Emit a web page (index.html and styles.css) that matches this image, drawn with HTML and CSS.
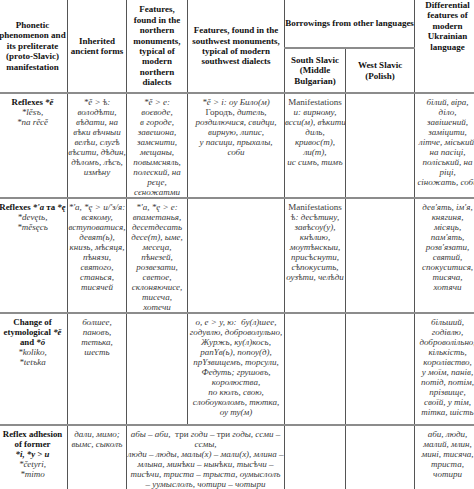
FILE: index.html
```html
<!DOCTYPE html>
<html lang="en">
<head>
<meta charset="utf-8">
<title>Table</title>
<link rel="stylesheet" href="styles.css">
</head>
<body>
<table class="tbl">
  <colgroup>
    <col class="w1"><col class="w2"><col class="w3"><col class="w4"><col class="w5"><col class="w6"><col class="w7">
  </colgroup>
  <thead>
    <tr class="h1">
      <th rowspan="2">Phonetic<br>phenomenon and<br>its preliterate<br>(proto-Slavic)<br>manifestation</th>
      <th rowspan="2">Inherited<br>ancient forms</th>
      <th rowspan="2">Features,<br>found in the<br>northern<br>monuments,<br>typical of<br>modern<br>northern<br>dialects</th>
      <th rowspan="2">Features, found in the<br>southwest monuments,<br>typical of modern<br>southwest dialects</th>
      <th colspan="2">Borrowings from other languages</th>
      <th rowspan="2" class="top">Differential<br>features of<br>modern<br>Ukrainian<br>language</th>
    </tr>
    <tr class="h2">
      <th>South Slavic<br>(Middle<br>Bulgarian)</th>
      <th>West Slavic<br>(Polish)</th>
    </tr>
  </thead>
  <tbody>
    <tr class="r1">
      <td><span class="hd">Reflexes <i>*ě</i></span><br>*lěsъ,<br>*na rěcě</td>
      <td>*ě &gt; <span class="y">ѣ</span>:<br>волод<span class="y">ѣ</span>ти,<br>в<span class="y">ѣ</span>дати, на<br>в<span class="y">ѣ</span>ки в<span class="y">ѣ</span>чныи<br>вел<span class="y">ѣ</span>и, слуг<span class="y">ѣ</span><br>в<span class="y">ѣ</span>сити, д<span class="y">ѣ</span>дин,<br>д<span class="y">ѣ</span>ломъ, л<span class="y">ѣ</span>съ,<br>изм<span class="y">ѣ</span>ну</td>
      <td>*ě &gt; е:<br>воєводе,<br>в городе,<br>завешона,<br>замснити,<br>мещаны,<br>повымсняль,<br>полеский, на<br>рєце,<br>сєножатми</td>
      <td>*ě &gt; і: оу Било(м)<br><span class="up">Городъ</span>, дитель,<br>роздилючися, свидци,<br>вирную, липис,<br>у пасици, прыхалы,<br>соби</td>
      <td><span class="up">Manifestations</span><br>и: вирному,<br>всси(м), в<span class="y">ѣ</span>кити,<br>диль,<br>кривос(т),<br>ли(т),<br>ис симъ, тимъ</td>
      <td></td>
      <td>білий, віра,<br>діло,<br>завішений,<br>заміцити,<br>літче, міський,<br>на пасіці,<br>поліський, на<br>ріці,<br>сіножать, соби</td>
    </tr>
    <tr class="r2">
      <td><span class="hd">Reflexes <i>*'a</i> та <i>*ę</i></span><br>*devętь,<br>*měsęcь</td>
      <td>*'a, *ę &gt; u/'з/я:<br>всякому,<br>вступоватися,<br>девят(ь),<br>книзь, м<span class="y">ѣ</span>сяця,<br>п<span class="y">ѣ</span>нязи,<br>святого,<br>станься,<br>тисячей</td>
      <td>*'a, *ę &gt; е:<br>впаметанья,<br>десетдесать<br>десе(т), ыме,<br>месеца,<br>п<span class="y">ѣ</span>незей,<br>розвезати,<br>светое,<br>склоняючисе,<br>тисеча,<br>хотечи</td>
      <td></td>
      <td><span class="up">Manifestations</span><br><span class="y">ѣ</span>: дес<span class="y">ѣ</span>тину,<br>зав<span class="y">ѣ</span>соу(у),<br>кн<span class="y">ѣ</span>лию,<br>моут<span class="y">ѣ</span>нскыи,<br>прис<span class="y">ѣ</span>снути,<br>с<span class="y">ѣ</span>покусить,<br>оуз<span class="y">ѣ</span>ти, чел<span class="y">ѣ</span>ди</td>
      <td></td>
      <td>дев'ять, ім'я,<br>княгиня,<br>місяць,<br>пам'ять,<br>розв'язати,<br>святий,<br>спокуситися,<br>тисяча,<br>хотячи</td>
    </tr>
    <tr class="r3">
      <td><span class="hd">Change of<br>etymological <i>*ě</i><br>and <i>*ō</i></span><br>*koliko,<br>*tetъka</td>
      <td>болшее,<br>пановъ,<br>тетька,<br>шесть</td>
      <td></td>
      <td>о, е &gt; у, ю: &nbsp;бу(л)шее,<br>годувлю, доброволульно,<br>Журжь, ку(л)кось,<br>panYв(ь), попоу(д),<br>прYзвищемъ, торсули,<br>Федуть; грушовъ,<br>королюства,<br>по кюлъ, свою,<br>слобоуколомъ, тютка,<br>оу ту(м)</td>
      <td></td>
      <td></td>
      <td>більший,<br>годівлю,<br>доброволільно,<br>кількість,<br>королівство,<br>у моїм, панів,<br>потід, потім,<br>прізвище,<br>своїй, у тім,<br>тітка, шість</td>
    </tr>
    <tr class="r4">
      <td><span class="hd">Reflex adhesion<br>of former<br><i>*i, *y &gt; u</i></span><br>*četyri,<br>*mimo</td>
      <td>дали, мимо;<br>вымс, сыколъ</td>
      <td colspan="2">абы – аби, &nbsp;<span class="up">три</span> годи – <span class="up">три</span> годы, ссми –<br>ссмы,<br>люди – люды, малы(х) – мали(х), млина –<br>млына, мин<span class="y">ѣ</span>ки – нын<span class="y">ѣ</span>ки, тыс<span class="y">ѣ</span>чи –<br>тис<span class="y">ѣ</span>чи, триста – трыста, оумыслолъ<br>– уумыслолъ, чотири – чотыри</td>
      <td></td>
      <td></td>
      <td>аби, люди,<br>малий, млин,<br>мині, тисяча,<br>триста,<br>чотири</td>
    </tr>
  </tbody>
</table>
</body>
</html>
```

FILE: styles.css
```css
html, body {
  margin: 0;
  padding: 0;
  background: #fff;
  overflow: hidden;
}

.tbl {
  border-collapse: collapse;
  table-layout: fixed;
  width: 483px;
  margin-left: -3px;
  font-family: "Liberation Serif", "Times New Roman", serif;
  font-size: 9px;
  line-height: 10px;
  color: #3a3a3a;
}

.w1 { width: 70px; }
.w2 { width: 59px; }
.w3 { width: 61px; }
.w4 { width: 97px; }
.w5 { width: 61px; }
.w6 { width: 69px; }
.w7 { width: 66px; }

.tbl th,
.tbl td {
  border-left: 1px solid #555;
  border-right: 1px solid #555;
  border-top: 2px solid #8c8c8c;
  border-bottom: 2px solid #8c8c8c;
  text-align: center;
  white-space: nowrap;
  overflow: hidden;
  padding: 0;
}

.tbl th {
  font-weight: bold;
  font-size: 9px;
  line-height: 10.4px;
  color: #111;
  vertical-align: middle;
}

.h1 th { border-top: none; }
.h1 { height: 48px; }
.h2 { height: 45px; }

.tbl th.top {
  vertical-align: top;
  padding-top: 0;
}

.tbl td {
  font-style: italic;
  vertical-align: top;
  padding-top: 3px;
}

.r1 { height: 104px; }
.r2 { height: 113px; }
.r3 { height: 112px; }
.r4 { height: 80px; }

.hd {
  font-style: normal;
  font-weight: bold;
  font-size: 8.8px;
  color: #111;
}

.up {
  font-style: normal;
}

.y {
  font-style: normal;
  font-size: 8.5px;
}
```
